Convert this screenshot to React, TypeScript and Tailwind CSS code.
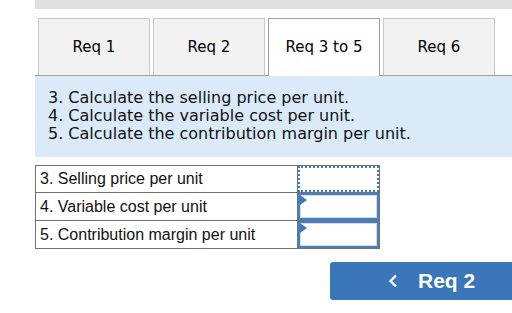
import React from 'react';

const TABS = ['Req 1', 'Req 2', 'Req 3 to 5', 'Req 6'];
const ACTIVE = 2;

const ROWS = [
  '3. Selling price per unit',
  '4. Variable cost per unit',
  '5. Contribution margin per unit',
];

const App: React.FC = () => {
  return (
    <div className="w-[512px] h-[313px] bg-white overflow-hidden pl-[35px]">
      {/* top strip */}
      <div className="h-[9px] bg-[#e0e0e0]" />

      {/* tabs */}
      <div className="mt-[9px] flex gap-[3px] pl-[3px] border-b border-[#9e9e9e] font-['DejaVu_Sans',sans-serif] text-[15px]">
        {TABS.map((tab, i) => (
          <div
            key={tab}
            className={
              i === ACTIVE
                ? 'w-[112px] h-[58px] -mb-px flex items-center justify-center bg-white border border-b-0 border-[#9e9e9e] text-black'
                : 'w-[112px] h-[57px] flex items-center justify-center bg-[#f2f2f2] border border-b-0 border-[#c8c8c8] text-black'
            }
          >
            <span>{tab}</span>
          </div>
        ))}
      </div>

      {/* instructions */}
      <div className="bg-[#dbeaf8] h-[81px] pl-[13px] pt-[13px] font-['DejaVu_Sans',sans-serif] text-[16px] leading-[18px] text-[#111]">
        <p>3. Calculate the selling price per unit.</p>
        <p>4. Calculate the variable cost per unit.</p>
        <p>5. Calculate the contribution margin per unit.</p>
      </div>

      {/* answer table */}
      <div className="mt-[8px] w-[345px] border border-[#707070] font-['Liberation_Sans',Arial,sans-serif] text-[16px] text-[#111]">
        {ROWS.map((label, i) => (
          <div
            key={label}
            className={`flex ${i > 0 ? 'h-[28px] border-t border-[#707070]' : 'h-[26px]'}`}
          >
            <div className="w-[262px] border-r border-[#707070] pl-[4px] flex items-center">{label}</div>
            <div className="flex-1 relative">
              {i === 0 ? (
                <div className="absolute inset-0 border-2 border-dotted border-[#3c78c0]" />
              ) : (
                <div className="absolute inset-0 border-2 border-[#4a7fbf] bg-white">
                  <div className="absolute inset-0 border border-[#c8dcf2]" />
                  <svg className="absolute left-0 top-0" width="8" height="10" viewBox="0 0 8 10">
                    <polygon points="0,0 7,5 0,10" fill="#3c78c0" />
                  </svg>
                </div>
              )}
            </div>
          </div>
        ))}
      </div>

      {/* nav button */}
      <div className="mt-[13px] flex justify-end">
        <button className="w-[182px] h-[38px] bg-[#3a76b8] rounded-l-[3px] flex items-center pl-[58px] gap-[20px] text-white font-['Liberation_Sans',Arial,sans-serif] font-bold text-[21px]">
          <svg width="10" height="14" viewBox="0 0 10 14">
            <polyline points="8,1.5 2.5,7 8,12.5" fill="none" stroke="white" strokeWidth="2.4" />
          </svg>
          <span>Req 2</span>
        </button>
      </div>
    </div>
  );
};

export default App;
